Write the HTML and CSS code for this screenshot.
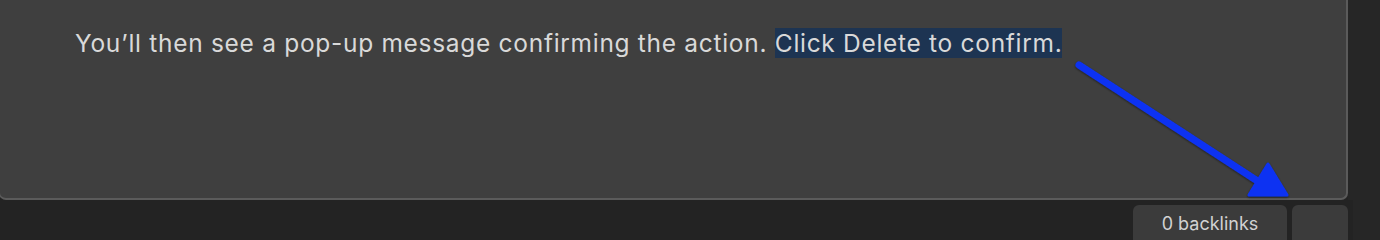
FILE: index.html
```html
<!DOCTYPE html>
<html>
<head>
<meta charset="utf-8">
<link rel="stylesheet" href="styles.css">
</head>
<body>
<div class="app">
  <div class="main-row">
    <div class="panel">
      <p class="text">You’ll then see a pop-up message confirming the action. <span class="sel">Click Delete to confirm.</span></p>
    </div>
    <div class="side"></div>
  </div>
  <div class="status">
    <div class="status-item backlinks">0 backlinks</div>
    <div class="status-item blank"></div>
    <div class="status-gap"></div>
  </div>
  <svg class="arrow" width="1380" height="240" viewBox="0 0 1380 240">
    <defs>
      <filter id="sh" x="-10%" y="-10%" width="120%" height="120%">
        <feDropShadow dx="0" dy="1" stdDeviation="1.2" flood-color="#000" flood-opacity="0.5"/>
      </filter>
    </defs>
    <g filter="url(#sh)" fill="#0b33f2" stroke="#0b33f2" stroke-linejoin="round" stroke-linecap="round">
      <line x1="1079" y1="65" x2="1256" y2="180" stroke-width="7"/>
      <polygon points="1268,164 1249,195 1287,195" stroke-width="3"/>
    </g>
  </svg>
</div>
</body>
</html>
```
FILE: styles.css
```css
html, body {
  margin: 0;
  padding: 0;
  background: #232323;
  overflow: hidden;
}
.app {
  position: relative;
  width: 1380px;
  height: 240px;
  display: flex;
  flex-direction: column;
  font-family: Inter, "Noto Sans", sans-serif;
}
.main-row {
  display: flex;
  height: 200px;
}
.panel {
  width: 1346px;
  height: 198px;
  background: #3f3f3f;
  border: 2px solid #5b5b5b;
  border-top: none;
  border-left-width: 1px;
  border-radius: 0 0 7px 7px;
  margin-left: -1px;
  box-sizing: content-box;
  flex: none;
}
.side {
  flex: 1;
  background: #262626;
}
.text {
  margin: 0;
  padding: 28px 0 0 75px;
  font-size: 24.5px;
  line-height: 31px;
  color: #d9d9d9;
  letter-spacing: 0.7px;
  white-space: nowrap;
}
.sel {
  background: #1d3452;
}
.status {
  display: flex;
  height: 40px;
  justify-content: flex-end;
  gap: 5px;
  padding-top: 5px;
  box-sizing: border-box;
  background: #232323;
}
.status-item {
  background: #3b3b3b;
  border-radius: 6px 6px 0 0;
  height: 35px;
  box-sizing: border-box;
  color: #d2d2d2;
  font-size: 18px;
  display: flex;
  align-items: center;
  justify-content: center;
  padding-top: 1px;
}
.backlinks {
  width: 154px;
}
.blank {
  width: 56px;
}
.status-gap {
  width: 27px;
  background: #262626;
  margin-top: -5px;
}
.arrow {
  position: absolute;
  left: 0;
  top: 0;
  pointer-events: none;
}
```
